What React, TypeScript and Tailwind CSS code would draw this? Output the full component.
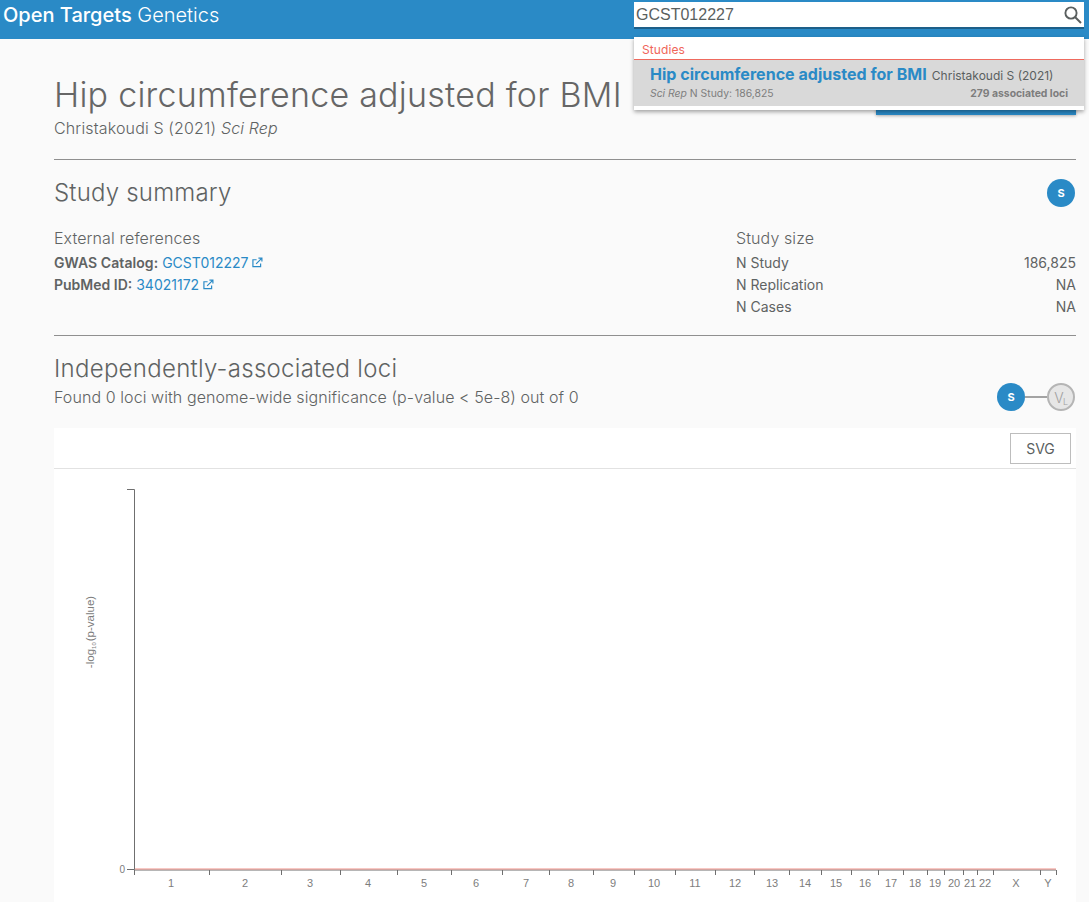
const chromosomes = [
  { label: "1", x: 171 },
  { label: "2", x: 245 },
  { label: "3", x: 310 },
  { label: "4", x: 368 },
  { label: "5", x: 424 },
  { label: "6", x: 476 },
  { label: "7", x: 526 },
  { label: "8", x: 571 },
  { label: "9", x: 613 },
  { label: "10", x: 654 },
  { label: "11", x: 695 },
  { label: "12", x: 735 },
  { label: "13", x: 772 },
  { label: "14", x: 805 },
  { label: "15", x: 836 },
  { label: "16", x: 865 },
  { label: "17", x: 891 },
  { label: "18", x: 915 },
  { label: "19", x: 935 },
  { label: "20", x: 954 },
  { label: "21", x: 970 },
  { label: "22", x: 985 },
  { label: "X", x: 1016 },
  { label: "Y", x: 1048 },
];

const ticks = [
  134, 209, 281, 340, 397, 451, 502, 549, 593, 634, 675, 715, 754, 789, 821,
  851, 878, 903, 927, 944, 963, 977, 993, 1040, 1056,
];

function ExternalIcon() {
  return (
    <svg
      viewBox="0 0 12 12"
      className="ml-[4px] inline-block h-[11px] w-[11px] align-[0px] text-[#2a8ac6]"
      fill="none"
      stroke="currentColor"
      strokeWidth="1.3"
    >
      <path d="M9.4 7v3.4H1V3h4" />
      <path d="M4.5 7.5 10.5 1.5M7 1.2h3.8V5" />
    </svg>
  );
}

function Dropdown() {
  return (
    <div className="absolute left-[634px] top-[37px] z-20 w-[450px] bg-white pb-[4px] pt-[4px] shadow-[0_2px_4px_rgba(0,0,0,0.35)]">
      <div className="border-b border-[#ef6a5e] px-[8px] text-[12px] leading-[18px] tracking-[0.1px] text-[#f0665a]">
        Studies
      </div>
      <div className="bg-[#d9d9d9] px-[16px] pb-[5px] pt-[4px]">
        <div className="flex h-[20px] items-baseline leading-[20px]">
          <span className="text-[16px] font-bold tracking-[0.03px] text-[#2a8ac6]">
            Hip circumference adjusted for BMI
          </span>
          <span className="ml-[5px] text-[12px] text-[#5a5f5f]">
            Christakoudi S (2021)
          </span>
        </div>
        <div className="mt-[2px] flex justify-between text-[10.4px] leading-[15px] text-[#7d7d7d]">
          <span>
            <em>Sci Rep</em> N Study: 186,825
          </span>
          <span className="font-bold">279 associated loci</span>
        </div>
      </div>
    </div>
  );
}

function ManhattanPlot() {
  return (
    <svg viewBox="54 469 1022 433" className="block h-[433px] w-[1022px]">
      <path
        d="M127 489.5h7.5V869.5M127 869.5h7.5"
        fill="none"
        stroke="#6f6f6f"
        strokeWidth="1"
      />
      <line x1="134" y1="870" x2="1056" y2="870" stroke="#6f6f6f" strokeWidth="1" />
      <line x1="135" y1="869" x2="1056" y2="869" stroke="#f1928a" strokeWidth="1.2" />
      {ticks.map((x) => (
        <line key={x} x1={x + 0.5} y1="870" x2={x + 0.5} y2="875" stroke="#6f6f6f" strokeWidth="1" />
      ))}
      <text x="125" y="873" textAnchor="end" fontSize="10" fill="#7d7d7d" fontFamily="'Liberation Sans', sans-serif">
        0
      </text>
      {chromosomes.map((c) => (
        <text
          key={c.label}
          x={c.x}
          y="887"
          textAnchor="middle"
          fontSize="11"
          fill="#7d7d7d"
          fontFamily="'Liberation Sans', sans-serif"
        >
          {c.label}
        </text>
      ))}
      <text
        transform="translate(94 632) rotate(-90)"
        textAnchor="middle"
        fontSize="11.5"
        fill="#7d7d7d"
        fontFamily="'Liberation Sans', sans-serif"
      >
        -log
        <tspan fontSize="6" dy="2">
          10
        </tspan>
        <tspan dy="-2" dx="1">(p-value)</tspan>
      </text>
    </svg>
  );
}

export default function App() {
  return (
    <div className="relative h-[902px] w-[1089px] overflow-hidden bg-[#fafafa] font-['Inter',sans-serif] text-[#5f6363]">
      {/* Header */}
      <header className="flex h-[39px] items-start justify-between bg-[#2a8ac6] pl-[3px] pr-[5px]">
        <div className="text-[20px] leading-[31px] text-white">
          <span className="font-medium">Open Targets</span>{" "}
          <span className="font-light">Genetics</span>
        </div>
        <div className="mt-[2px] flex h-[27px] w-[450px] items-center justify-between border-b-2 border-[#1d5f89] bg-white pl-[2px] pr-[1px]">
          <span className="font-['Liberation_Sans',sans-serif] text-[16px] text-[#5a5f5f]">
            GCST012227
          </span>
          <svg viewBox="0 0 20 20" className="h-[20px] w-[20px]" fill="none" stroke="#5a5f5f" strokeWidth="1.9">
            <circle cx="8" cy="8" r="5.6" />
            <path d="m12 12 6 6" />
          </svg>
        </div>
      </header>

      <Dropdown />

      <main className="pl-[54px] pr-[13px]">
        {/* Title */}
        <div className="flex h-[121px] items-start justify-between border-b border-[#8f8f8f] pt-[33px]">
          <div>
            <h1 className="text-[34px] font-light leading-[46px] tracking-[0.25px] text-[#666666]">
              Hip circumference adjusted for BMI
            </h1>
            <div className="mt-[1px] text-[16px] font-light leading-[18px] tracking-[0.15px]">
              Christakoudi S (2021) <em>Sci Rep</em>
            </div>
          </div>
          <button className="mt-[3px] h-[40px] w-[200px] bg-[#2a8ac6] shadow-[0_1px_3px_rgba(0,0,0,0.3)]" />
        </div>

        {/* Study summary */}
        <section className="h-[176px] border-b border-[#8f8f8f]">
          <div className="flex items-start justify-between pr-[1px] pt-[17px]">
            <h2 className="text-[24px] font-light leading-[32px] tracking-[0.2px]">Study summary</h2>
            <div className="mt-[2px] flex h-[28px] w-[28px] items-center justify-center rounded-full bg-[#2a8ac6] text-[11px] font-bold text-white">
              S
            </div>
          </div>
          <div className="mt-[18px] flex">
            <div className="w-[682px]">
              <div className="mb-[3px] text-[16px] font-light leading-[22px] tracking-[0.1px]">External references</div>
              <div className="text-[14px] leading-[22px]">
                <strong className="font-semibold tracking-[0.07px]">GWAS Catalog:</strong>{" "}
                <span className="text-[#2a8ac6]">GCST012227</span>
                <ExternalIcon />
              </div>
              <div className="text-[14px] leading-[22px]">
                <strong className="font-semibold">PubMed ID:</strong>{" "}
                <span className="text-[#2a8ac6]">34021172</span>
                <ExternalIcon />
              </div>
            </div>
            <div className="flex-1">
              <div className="mb-[3px] text-[16px] font-light leading-[22px] tracking-[0.1px]">Study size</div>
              <div className="flex justify-between text-[14px] leading-[22px]">
                <span>N Study</span>
                <span>186,825</span>
              </div>
              <div className="flex justify-between text-[14px] leading-[22px]">
                <span>N Replication</span>
                <span>NA</span>
              </div>
              <div className="flex justify-between text-[14px] leading-[22px]">
                <span>N Cases</span>
                <span>NA</span>
              </div>
            </div>
          </div>
        </section>

        {/* Loci */}
        <section>
          <div className="flex items-end justify-between pr-[1px] pt-[17px]">
            <div>
              <h2 className="text-[24px] font-light leading-[32px] tracking-[0.28px]">Independently-associated loci</h2>
              <div className="mt-[2px] text-[16px] font-light leading-[20px] tracking-[0.08px]">
                Found 0 loci with genome-wide significance (p-value &lt; 5e-8) out of 0
              </div>
            </div>
            <div className="mb-[-4px] flex items-center">
              <div className="flex h-[28px] w-[28px] items-center justify-center rounded-full bg-[#2a8ac6] text-[11px] font-bold text-white">
                S
              </div>
              <div className="h-[2px] w-[22px] bg-[#a3a3a3]" />
              <div className="relative flex h-[28px] w-[28px] items-center justify-center rounded-full border-2 border-[#b5b5b5] bg-[#e6e6e6] text-[14px] font-light text-[#a0a0a0]">
                <span className="mr-[4px]">V</span>
                <span className="absolute bottom-[1px] right-[5px] text-[9px]">L</span>
              </div>
            </div>
          </div>

          <div className="mt-[21px] bg-white">
            <div className="flex h-[41px] items-center justify-end border-b border-[#e2e2e2] pr-[5px]">
              <button className="h-[31px] w-[61px] border border-[#bdbdbd] text-[14px] text-[#5a5f5f]">
                SVG
              </button>
            </div>
            <ManhattanPlot />
          </div>
        </section>
      </main>
    </div>
  );
}
